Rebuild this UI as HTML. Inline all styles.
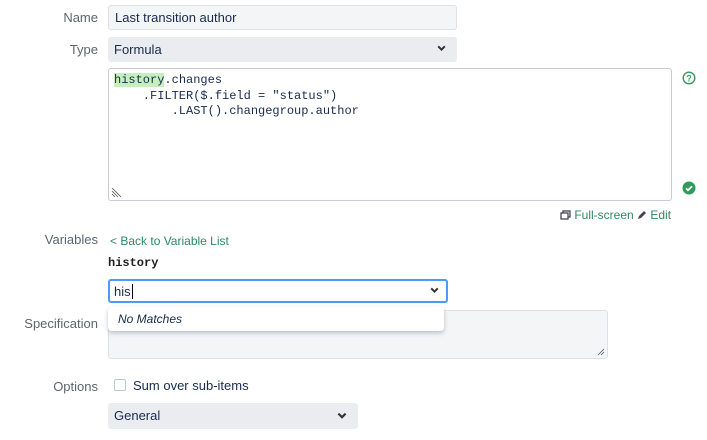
<!DOCTYPE html><html><head><style>
body{margin:0;width:707px;height:440px;background:#fff;font-family:"Liberation Sans",sans-serif;font-size:13px;color:#172b4d;position:relative;overflow:hidden}
.a{position:absolute}
.lbl{position:absolute;right:609px;color:#5e6470;font-size:13px;text-align:right}
.box{position:absolute;box-sizing:border-box;border-radius:3px}
.sel{background:#ebecf0}
.chev{position:absolute;right:10px;top:7px}
.mono{font-family:"Liberation Mono",monospace;font-size:12px}
.g{color:#2b8a62;font-size:12px}
</style></head><body>
<div class="lbl" style="top:10px">Name</div>
<div class="box" style="left:108px;top:5px;width:349px;height:25px;background:#f4f5f7;border:1px solid #dfe1e6;padding:4px 6px">Last transition author</div>
<div class="lbl" style="top:42px">Type</div>
<div class="box sel" style="left:108px;top:37px;width:349px;height:25px;padding:5px 6px">Formula<svg class="chev" width="11" height="9" viewBox="0 0 10 8"><path d="M2 2l3 3 3-3" stroke="#333" stroke-width="1.8" fill="none"/></svg></div>
<div class="box" style="left:108px;top:68px;width:564px;height:133px;border:1px solid #c9ccd2;padding:4px 5px;line-height:15.5px" >
<div class="mono" style="white-space:pre"><span style="background:#c6efc0">history</span>.changes
    .FILTER($.field = "status")
        .LAST().changegroup.author</div>
<svg class="a" style="left:2px;bottom:2px" width="10" height="10"><path d="M1 3l6 6M1 6l3 3M1 0l9 9" stroke="#555" stroke-width="0.8"/></svg>
</div>
<svg class="a" style="left:682px;top:71px" width="14" height="14" viewBox="0 0 14 14"><circle cx="7" cy="7" r="5.8" stroke="#3a9a63" stroke-width="1.4" fill="none"/><text x="7" y="10.5" font-size="9" font-weight="bold" text-anchor="middle" fill="#3a9a63" font-family="Liberation Sans">?</text></svg>
<svg class="a" style="left:682px;top:181px" width="14" height="14" viewBox="0 0 14 14"><circle cx="7" cy="7" r="6.5" fill="#2f9a5c"/><path d="M4 7.2l2 2 4-4" stroke="#fff" stroke-width="1.8" fill="none"/></svg>
<div class="a g" style="left:560px;top:208px"><svg width="11" height="10" style="vertical-align:-1px"><rect x="3" y="1" width="7" height="6" fill="none" stroke="#445" stroke-width="1.3"/><rect x="1" y="3" width="7" height="6" fill="#fff" stroke="#445" stroke-width="1.3"/></svg> Full-screen <svg width="10" height="10" style="vertical-align:-1px"><path d="M1 9l1-3 5-5 2 2-5 5z" fill="#445"/></svg> Edit</div>
<div class="lbl" style="top:232px">Variables</div>
<div class="a g" style="left:110px;top:234px">&lt; Back to Variable List</div>
<div class="a mono" style="left:108px;top:256px;font-weight:bold;color:#222">history</div>
<div class="box" style="left:108px;top:279px;width:340px;height:24px;border:2px solid #4c9aff;padding:3px 4px">his<span style="border-left:1px solid #000;margin-left:1px"></span><svg class="chev" style="top:5px;right:6px" width="11" height="9" viewBox="0 0 10 8"><path d="M2 2l3 3 3-3" stroke="#333" stroke-width="1.8" fill="none"/></svg></div>
<div class="lbl" style="top:316px">Specification</div>
<div class="box" style="left:108px;top:310px;width:500px;height:49px;background:#f4f5f7;border:1px solid #dfe1e6"><svg class="a" style="right:2px;bottom:2px" width="8" height="8"><path d="M1 7l6-6M4 7l3-3" stroke="#555" stroke-width="0.8"/></svg></div>
<div class="box" style="left:108px;top:307px;width:336px;height:24px;background:#fff;box-shadow:0 2px 5px rgba(9,30,66,.25);border-radius:4px;padding:5px 10px;font-style:italic;font-size:12px">No Matches</div>
<div class="lbl" style="top:379px">Options</div>
<div class="box" style="left:114px;top:379px;width:12px;height:12px;border:1px solid #c1c7d0;border-radius:2px"></div>
<div class="a" style="left:133px;top:378px">Sum over sub-items</div>
<div class="box sel" style="left:108px;top:403px;width:250px;height:26px;padding:5px 6px">General<svg class="chev" style="top:8px" width="12" height="10" viewBox="0 0 10 8"><path d="M2 2l3 3 3-3" stroke="#333" stroke-width="1.8" fill="none"/></svg></div>
</body></html>
